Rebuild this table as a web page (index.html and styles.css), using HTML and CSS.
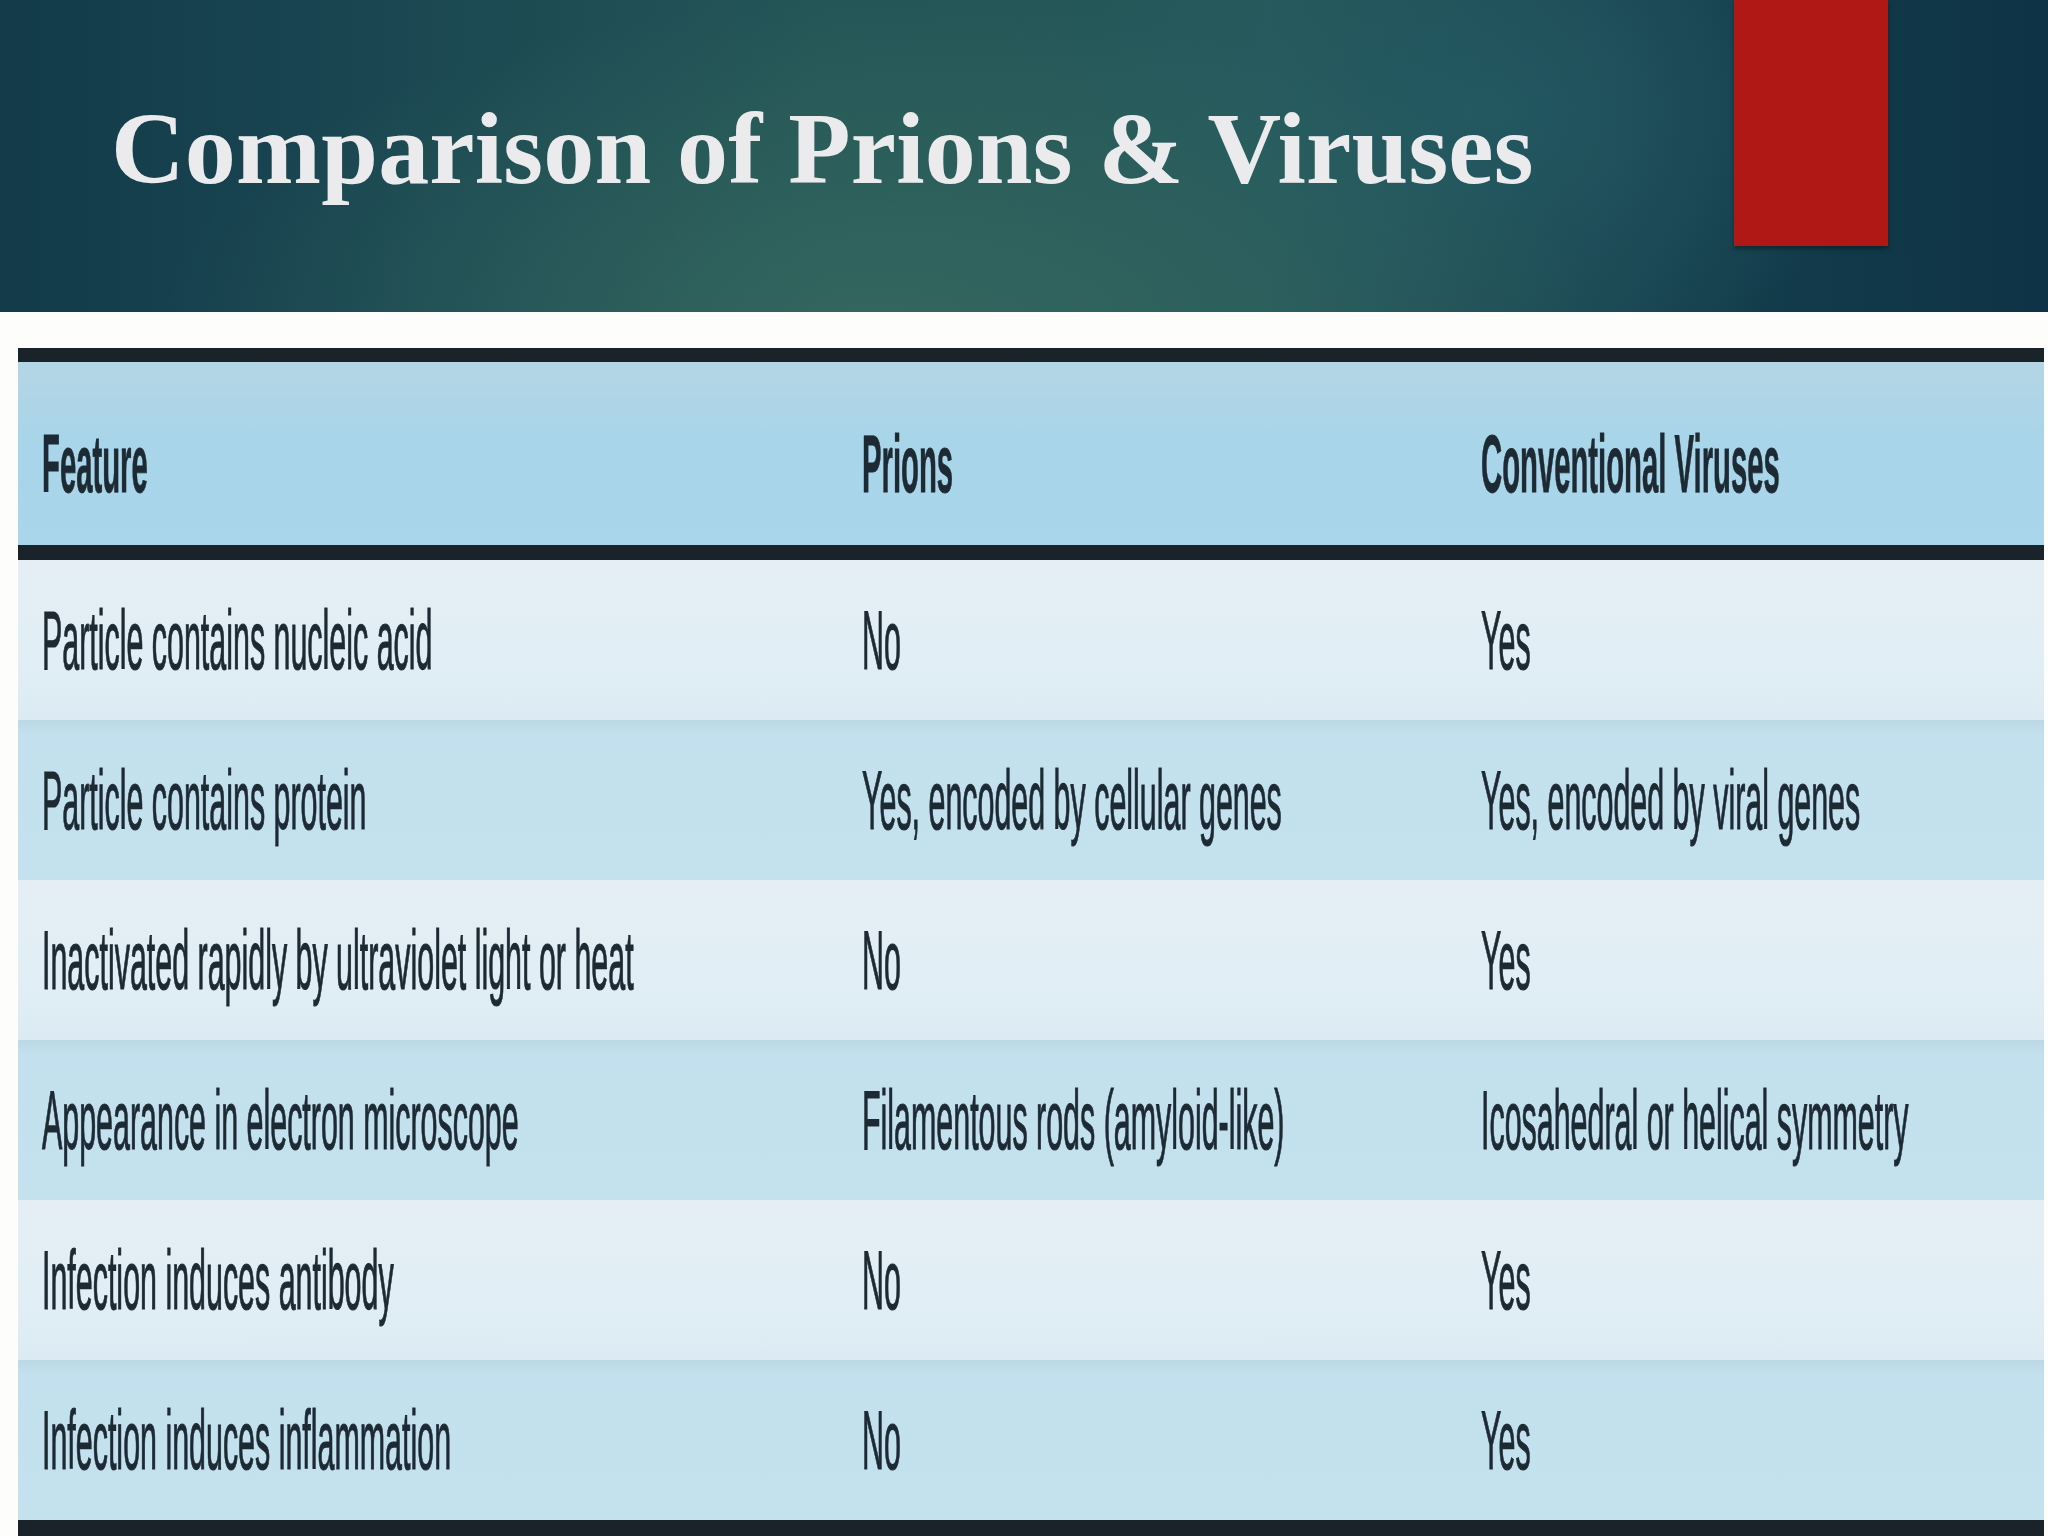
FILE: index.html
```html
<!DOCTYPE html>
<html lang="en">
<head>
<meta charset="utf-8">
<title>Comparison of Prions &amp; Viruses</title>
<link rel="stylesheet" href="styles.css">
</head>
<body>
<div class="slide">
  <header class="banner">
    <h1 class="title">Comparison of Prions &amp; Viruses</h1>
    <div class="accent"></div>
  </header>
  <section class="compare" role="table">
    <div class="row head-row" role="row">
      <div class="cell" role="columnheader"><span class="txt">Feature</span></div>
      <div class="cell" role="columnheader"><span class="txt">Prions</span></div>
      <div class="cell" role="columnheader"><span class="txt">Conventional Viruses</span></div>
    </div>
    <div class="row light" role="row">
      <div class="cell" role="cell"><span class="txt">Particle contains nucleic acid</span></div>
      <div class="cell" role="cell"><span class="txt">No</span></div>
      <div class="cell" role="cell"><span class="txt">Yes</span></div>
    </div>
    <div class="row dark" role="row">
      <div class="cell" role="cell"><span class="txt">Particle contains protein</span></div>
      <div class="cell" role="cell"><span class="txt">Yes, encoded by cellular genes</span></div>
      <div class="cell" role="cell"><span class="txt">Yes, encoded by viral genes</span></div>
    </div>
    <div class="row light" role="row">
      <div class="cell" role="cell"><span class="txt">Inactivated rapidly by ultraviolet light or heat</span></div>
      <div class="cell" role="cell"><span class="txt">No</span></div>
      <div class="cell" role="cell"><span class="txt">Yes</span></div>
    </div>
    <div class="row dark" role="row">
      <div class="cell" role="cell"><span class="txt">Appearance in electron microscope</span></div>
      <div class="cell" role="cell"><span class="txt">Filamentous rods (amyloid-like)</span></div>
      <div class="cell" role="cell"><span class="txt">Icosahedral or helical symmetry</span></div>
    </div>
    <div class="row light" role="row">
      <div class="cell" role="cell"><span class="txt">Infection induces antibody</span></div>
      <div class="cell" role="cell"><span class="txt">No</span></div>
      <div class="cell" role="cell"><span class="txt">Yes</span></div>
    </div>
    <div class="row dark" role="row">
      <div class="cell" role="cell"><span class="txt">Infection induces inflammation</span></div>
      <div class="cell" role="cell"><span class="txt">No</span></div>
      <div class="cell" role="cell"><span class="txt">Yes</span></div>
    </div>
  </section>
</div>
</body>
</html>
```

FILE: styles.css
```css
html, body {
  margin: 0;
  padding: 0;
  background: #fdfdfb;
}

.slide {
  width: 2048px;
  height: 1536px;
  overflow: hidden;
  background: #fdfdfb;
}

.banner {
  height: 312px;
  display: flex;
  justify-content: space-between;
  align-items: flex-start;
  padding: 0 160px 0 111px;
  box-sizing: border-box;
  background:
    radial-gradient(ellipse 720px 330px at 880px 330px, rgba(58, 110, 98, 0.7) 0%, rgba(58, 110, 98, 0) 100%),
    radial-gradient(ellipse 420px 260px at 1480px 110px, rgba(38, 94, 104, 0.65) 0%, rgba(38, 94, 104, 0) 100%),
    linear-gradient(90deg, #133b4a 0%, #184350 14%, #245657 40%, #255859 62%, #1b4853 78%, #123a4a 88%, #0e3346 100%);
}

.title {
  margin: 98px 0 0 0;
  font-family: "Liberation Serif", "Times New Roman", serif;
  font-weight: bold;
  font-size: 102px;
  line-height: 1;
  color: #ebebee;
  white-space: nowrap;
  letter-spacing: 0.2px;
}

.accent {
  width: 154px;
  height: 246px;
  background: #b01815;
  box-shadow: 0 3px 4px rgba(0, 0, 0, 0.35);
}

.compare {
  margin: 36px 4px 0 18px;
  border-top: 14px solid #1a2329;
  border-bottom: 16px solid #1a2329;
  font-family: "Liberation Sans", Arial, sans-serif;
  color: #1d2a33;
}

.row {
  display: grid;
  grid-template-columns: 820px 619px 1fr;
  align-items: center;
  height: 160px;
}

.cell {
  padding-left: 24px;
  white-space: nowrap;
}

.head-row {
  height: 183px;
  box-sizing: content-box;
  border-bottom: 15px solid #1a2329;
  background: linear-gradient(180deg, #b4d6e5 0%, #a8d5e9 45%, #a9d6ea 100%);
  font-weight: bold;
}

.head-row .cell {
  padding-top: 20px;
}

.light {
  background: linear-gradient(180deg, #e4eef4 0%, #e1eef5 60%, #dcebf3 100%);
}

.dark {
  background: linear-gradient(180deg, #bcd8e5 0%, #c3e0ee 10%, #c4e1ee 100%);
}

.txt {
  display: inline-block;
  font-size: 84px;
  line-height: 1;
  transform: scaleX(0.362);
  transform-origin: left center;
  -webkit-text-stroke: 1.2px #1d2a33;
}

.head-row .txt {
  font-size: 82px;
  transform: scaleX(0.357);
  -webkit-text-stroke: 0.8px #1d2a33;
}
```
